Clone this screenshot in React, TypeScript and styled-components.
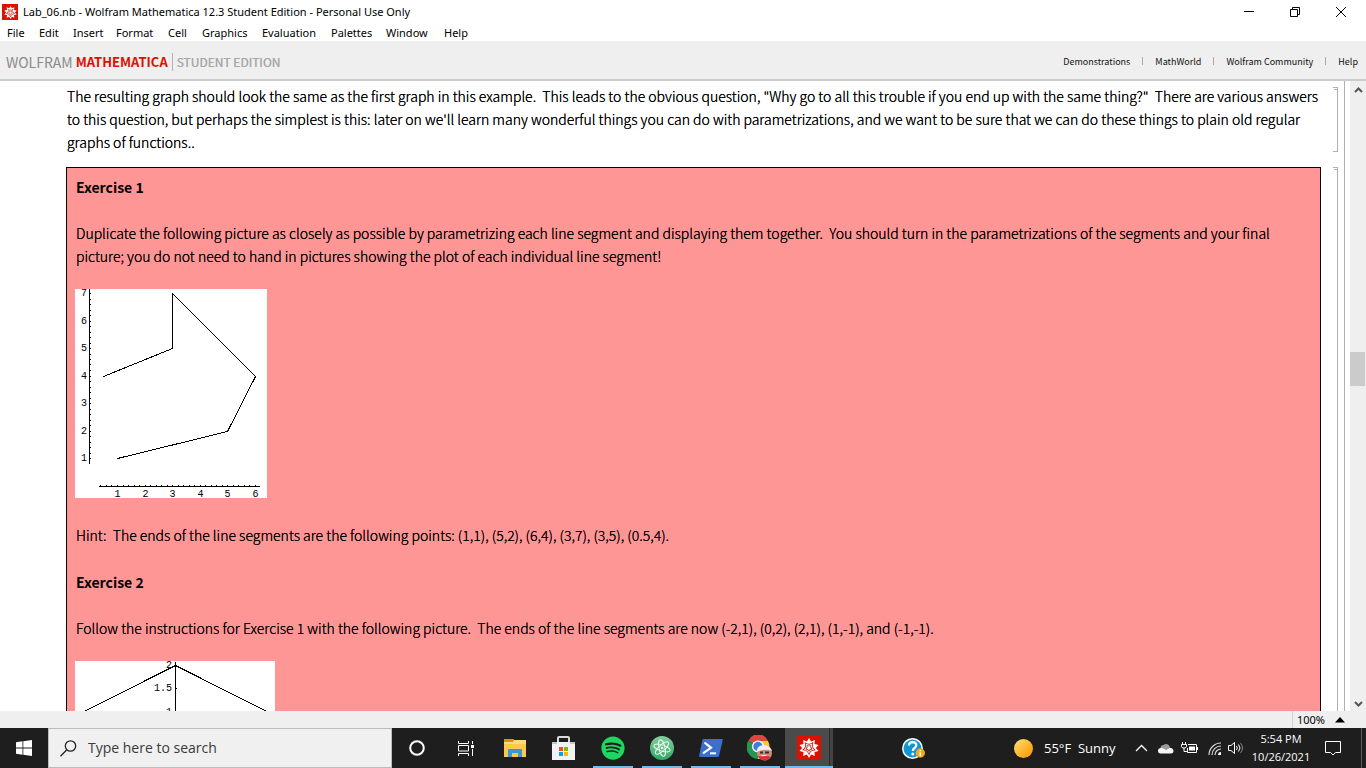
import React from 'react';
import styled, { createGlobalStyle } from 'styled-components';
import { FaSpotify } from 'react-icons/fa';
import { SiWolframmathematica } from 'react-icons/si';

const ui = "'Open Sans', 'Noto Sans', sans-serif";
const uiSmall = "'Noto Sans', 'Open Sans', sans-serif";
const doc = "'Noto Sans CJK SC', 'Noto Sans', sans-serif";

const GlobalStyle = createGlobalStyle`
  * { box-sizing: border-box; }
  body { margin: 0; background: #fff; color: #000; font-family: ${ui}; }
  button { border: 0; padding: 0; background: none; color: inherit; font: inherit; }
  svg { display: block; flex: none; }
`;

const Screen = styled.div`
  display: flex;
  flex-direction: column;
  height: 100vh;
  overflow: hidden;
`;

/* ---------- window chrome ---------- */

const TitleBar = styled.header`
  flex: none;
  display: flex;
  align-items: center;
  height: 24px;
  padding: 0 2px;
`;

const AppBadge = styled.span<{ $size: number }>`
  display: flex;
  align-items: center;
  justify-content: center;
  width: ${p => p.$size}px;
  height: ${p => p.$size}px;
  background: #dd1100;
  color: #fff;
`;

const WindowTitle = styled.h1`
  flex: 1;
  margin: 0 0 0 5px;
  font-family: ${uiSmall};
  font-size: 11px;
  font-weight: 400;
  line-height: 16px;
  white-space: nowrap;
`;

const WindowButton = styled.button`
  display: flex;
  align-items: center;
  justify-content: center;
  width: 46px;
  height: 20px;
`;

const MenuBar = styled.nav`
  flex: none;
  display: grid;
  grid-template-columns: 32px 34px 43px 52px 34px 60px 69px 55px 58px auto;
  justify-content: start;
  height: 17px;
  padding-left: 7px;
`;

const MenuItem = styled.button`
  font-family: ${uiSmall};
  font-size: 11px;
  line-height: 16px;
  text-align: left;
`;

const Banner = styled.div`
  flex: none;
  display: flex;
  align-items: center;
  justify-content: space-between;
  height: 40px;
  padding: 4px 8px 0 6px;
  background: #efefef;
  border-bottom: 2px solid #cbcbcb;
`;

const Brand = styled.div`
  display: flex;
  align-items: center;
  gap: 3px;
  font-family: ${doc};
  font-size: 14px;
  line-height: 18px;
  color: #8a8a8a;
  white-space: nowrap;
`;

const BrandRed = styled.span`
  color: #dd1100;
  font-size: 13px;
  font-weight: 700;
`;

const Edition = styled.span`
  margin-left: 1px;
  padding-left: 4px;
  border-left: 1px solid #b4b4b4;
  color: #a8a8a8;
  font-size: 12px;
  text-shadow: 0 0 0 #a8a8a8;
`;

const BannerLinks = styled.nav`
  display: flex;
  align-items: center;
  font-family: ${doc};
  font-size: 9px;
  line-height: 12px;
`;

const BannerLink = styled.a`
  color: #111;
  text-decoration: none;
  white-space: nowrap;
  & + & {
    margin-left: 12px;
    padding-left: 13px;
    background: linear-gradient(#a8a8a8, #a8a8a8) left 1px / 1px 8px no-repeat;
  }
`;

/* ---------- notebook ---------- */

const Workspace = styled.div`
  flex: 1;
  min-height: 0;
  display: flex;
`;

const Notebook = styled.main`
  flex: 1;
  min-width: 0;
  overflow: hidden;
  padding: 4px 6px 0 66px;
  border-right: 1px solid #b0b0b0;
  font-family: ${doc};
  font-size: 14px;
  font-weight: 300;
  line-height: 23px;
`;

const CellRow = styled.section`
  display: flex;
  gap: 12px;
  & + & { margin-top: 13px; }
`;

const TextCell = styled.p`
  flex: 1;
  min-width: 0;
  margin: 0;
  padding: 0 0 0 1px;
  white-space: pre;
  text-shadow: 0 0 0 #000;
`;

const ExerciseCell = styled.article`
  flex: 1;
  min-width: 0;
  padding: 8px 8px 20px;
  background: #ff9696;
  border: 1px solid #000;
`;

const Heading = styled.h2`
  margin: 0 0 23px 1px;
  font-size: 14px;
  font-weight: 700;
  line-height: 23px;
`;

const Para = styled.p<{ $after?: number }>`
  margin: 0 0 ${p => p.$after ?? 21}px 1px;
  white-space: pre;
  text-shadow: 0 0 0 #000;
`;

const Figure = styled.figure`
  margin: 0 0 26px;
`;

const Bracket = styled.div<{ $inset?: number }>`
  width: 5px;
  flex: none;
  margin: ${p => p.$inset ?? 0}px 0;
  border: 1px solid #b0b0b0;
  border-left: 0;
  background: linear-gradient(#b0b0b0, #b0b0b0) right 1px / 3px 1px no-repeat;
`;

const ScrollBar = styled.div`
  flex: none;
  display: flex;
  flex-direction: column;
  align-items: center;
  width: 16px;
  margin-left: 5px;
  padding: 5px 0 3px;
  background: #efefef;
`;

const ScrollTrack = styled.div`
  flex: 1;
  display: flex;
  flex-direction: column;
  align-self: stretch;
`;

const Spacer = styled.div<{ $grow: number }>`
  flex: ${p => p.$grow};
`;

const Thumb = styled.div`
  height: 34px;
  margin-right: 1px;
  background: #cbcbcb;
`;

const StatusBar = styled.footer`
  flex: none;
  display: flex;
  align-items: center;
  justify-content: flex-end;
  height: 17px;
  padding-right: 21px;
  background: #efefef;
`;

const ZoomLevel = styled.button`
  display: flex;
  align-items: center;
  gap: 10px;
  height: 17px;
  padding-left: 4px;
  border-left: 1px solid #d4d4d4;
  font-family: ${uiSmall};
  font-size: 11px;
  line-height: 16px;
`;

/* ---------- taskbar ---------- */

const Taskbar = styled.div`
  flex: none;
  display: flex;
  height: 40px;
  background: #1e1e1e;
  color: #fff;
`;

const StartButton = styled.button`
  display: flex;
  align-items: center;
  justify-content: center;
  width: 48px;
`;

const SearchBox = styled.label`
  display: flex;
  align-items: center;
  gap: 11px;
  width: 344px;
  padding-left: 11px;
  background: #f0f0f0;
  border: 1px solid #bcbcbc;
  color: #333;
`;

const SearchInput = styled.input`
  flex: 1;
  min-width: 0;
  border: 0;
  padding: 0;
  outline: 0;
  background: none;
  font-family: ${ui};
  font-size: 14px;
  line-height: 20px;
  &::placeholder { color: #3a3a3a; opacity: 1; }
`;

const TaskButton = styled.button<{ $state?: 'running' | 'active' }>`
  display: flex;
  align-items: center;
  justify-content: center;
  width: 49px;
  background: ${p =>
    p.$state === 'active'
      ? 'linear-gradient(#76b9ed, #76b9ed) right bottom / 48px 2px no-repeat, linear-gradient(90deg, transparent 1px, #4b4b4b 1px, #4b4b4b 45px, #2a2a2a 45px, #2a2a2a 46px, #444 46px)'
      : p.$state === 'running'
        ? 'linear-gradient(#76b9ed, #76b9ed) 5px bottom / 40px 2px no-repeat'
        : 'none'};
`;

const HelpButton = styled(TaskButton)`
  margin-left: 56px;
`;

const Tray = styled.div`
  display: flex;
  align-items: center;
  margin-left: auto;
`;

const TrayButton = styled.button<{ $width: number }>`
  display: flex;
  align-items: center;
  justify-content: center;
  width: ${p => p.$width}px;
  height: 40px;
`;

const Weather = styled.button`
  display: flex;
  align-items: center;
  gap: 11px;
  width: 115px;
  height: 40px;
  font-size: 13px;
  white-space: pre;
`;

const Sun = styled.span`
  width: 19px;
  height: 19px;
  border-radius: 50%;
  background: linear-gradient(135deg, #ffe27a, #ffb52e 55%, #ff9500);
`;

const Clock = styled.button`
  width: 70px;
  height: 40px;
  font-size: 11px;
  line-height: 18px;
  text-align: center;
`;

const ShowDesktop = styled.button`
  width: 5px;
  margin-left: 11px;
  height: 40px;
  border-left: 1px solid #5c5c5c;
`;

/* ---------- plots ---------- */

const PlotSvg = styled.svg`
  background: #fff;
  overflow: visible;
  font-family: 'Liberation Mono', monospace;
  font-size: 10px;
  font-weight: 400;
  text-anchor: middle;
  fill: #000;
`;

/* plot units to the centre of a pixel */
const px = (x: number) => Math.floor(42.5 + (x - 1) * 27.6) + 0.5;
const py = (y: number) => Math.floor(169.5 - (y - 1) * 27.5) + 0.5;

function PlotOne() {
  const pts = [[1, 1], [5, 2], [6, 4], [3, 7], [3, 5], [0.5, 4]];
  return (
    <PlotSvg width="192" height="209" viewBox="0 0 192 209" role="img" aria-label="Line segments of Exercise 1">
      <g stroke="#000" fill="none" shapeRendering="crispEdges">
        <path d="M14.5 0V175M24 197.5H185" />
        {Array.from({ length: 31 }, (_, i) => (
          <path key={i} d={`M15 ${py(1 + i / 5)}h1`} />
        ))}
        {Array.from({ length: 29 }, (_, i) => (
          <path key={i} d={`M${px(0.4 + i / 5)} 197v-1`} />
        ))}
        <polyline points={pts.map(([x, y]) => `${px(x)},${py(y)}`).join(' ')} />
      </g>
      {[1, 2, 3, 4, 5, 6, 7].map(n => (
        <text key={n} x="9" y={py(n) + 2.5}>{n}</text>
      ))}
      {[1, 2, 3, 4, 5, 6].map(n => (
        <text key={n} x={px(n)} y="208">{n}</text>
      ))}
    </PlotSvg>
  );
}

function PlotTwo() {
  return (
    <PlotSvg width="200" height="200" viewBox="0 0 200 200" role="img" aria-label="Line segments of Exercise 2">
      <g stroke="#000" fill="none" shapeRendering="crispEdges">
        <path d="M100.5 1V190M101 27.5h1M101 50.5h1" />
        <polyline points="100.5,4.5 191.5,50.2 146.5,142.5 54.5,142.5 9.5,50.2 100.5,4.5" />
      </g>
      <text x="94" y="7">2</text>
      <text x="88" y="30">1.5</text>
      <text x="94" y="54">1</text>
    </PlotSvg>
  );
}

/* ---------- icons ---------- */

const Chevron = ({ up }: { up?: boolean }) => (
  <svg width="9" height="8" viewBox="0 0 9 8" fill="none" stroke="#555" strokeWidth="2">
    <path d={up ? 'M1 6l3.500-3.500L8 6' : 'M1 2l3.500 3.500L8 2'} />
  </svg>
);

const TaskViewIcon = () => (
  <svg width="16" height="15" viewBox="0 0 16 15" fill="none" stroke="#fff">
    <path d="M.5 0v2.500h10V0M.5 15v-2.500h10V15M.5 4.500h10v5.500H.5zM14.500 0v3M14.500 8v7" />
    <path d="M13 4h3v3h-3z" fill="#fff" stroke="none" />
  </svg>
);

const ExplorerIcon = () => (
  <svg width="22" height="18" viewBox="0 0 22 18">
    <path d="M0 0h9l1 1h12v17H0z" fill="#fdc94c" />
    <path d="M0 0h9l1 1v1L9 3H0z" fill="#d99400" />
    <path d="M10 1h12v4H0V3h9z" fill="#fbd97e" />
    <path d="M4 18v-7q0-1 1-1h12q1 0 1 1v7h-4v-4H8v4z" fill="#3d96d8" />
  </svg>
);

const StoreIcon = () => (
  <svg width="23" height="24" viewBox="0 0 23 24">
    <path d="M6 7V2q0-1 1-1h9q1 0 1 1v5" fill="none" stroke="#dadada" strokeWidth="2" />
    <path d="M0 6h23v18H0z" fill="#f2f2f2" />
    <path d="M0 6h5v2H0zM18 6h5v2h-5z" fill="#c4c4c4" />
    <path d="M7 11h4v4H7z" fill="#f25022" />
    <path d="M12 11h4v4h-4z" fill="#7fba00" />
    <path d="M7 16h4v4H7z" fill="#00a4ef" />
    <path d="M12 16h4v4h-4z" fill="#ffb900" />
  </svg>
);

const AtomIcon = () => (
  <svg width="24" height="24" viewBox="0 0 24 24">
    <defs>
      <linearGradient id="atom" x1="0" y1="0" x2="0" y2="1">
        <stop offset="0" stopColor="#84cf9f" />
        <stop offset="1" stopColor="#2fa866" />
      </linearGradient>
    </defs>
    <circle cx="12" cy="12" r="12" fill="url(#atom)" />
    <g fill="none" stroke="#e6f8ec" strokeWidth="1">
      <ellipse cx="12" cy="12" rx="3" ry="8.500" transform="rotate(-12 12 12)" />
      <ellipse cx="12" cy="12" rx="3" ry="8.500" transform="rotate(48 12 12)" />
      <ellipse cx="12" cy="12" rx="3" ry="8.500" transform="rotate(108 12 12)" />
    </g>
    <circle cx="12" cy="12" r="1.300" fill="#fff" />
  </svg>
);

const PowerShellIcon = () => (
  <svg width="24" height="18" viewBox="0 0 24 18">
    <path d="M4.500 0H23q1 0 .8 1L20 17q-.3 1-1.300 1H.8Q-.1 18 .1 17L3.400 1q.2-1 1.100-1z" fill="#3c6fc9" />
    <path d="M5.500 3.500l6.500 5.300-8 5.500" fill="none" stroke="#fff" strokeWidth="2.200" />
    <path d="M11 14.300h6" stroke="#fff" strokeWidth="2" />
  </svg>
);

const ChromeIcon = () => (
  <svg width="26" height="26" viewBox="0 0 26 26">
    <path d="M11 12L1.500 5.500A11 12 0 0 1 21 6z" fill="#d8483e" />
    <path d="M11 12L13 6h8A11 12 0 0 1 11 24z" fill="#f8c83c" />
    <path d="M11 12v12A12 12 0 0 1 1.500 5.500z" fill="#27964f" />
    <circle cx="11" cy="11.500" r="6" fill="#fff" />
    <circle cx="11" cy="11.500" r="4.700" fill="#3f7be0" />
    <circle cx="17.500" cy="18" r="7.500" fill="#c98f7c" />
    <path d="M9.500 17q.5-7 8-7 6 1 7.500 6-7-3-15.500 1z" fill="#f2eeee" />
    <path d="M10.500 21l5.500.5 3-1 4.500 1.500q-2 3.500-5.500 3.500-5-.5-7.500-4.500z" fill="#d8303a" />
    <path d="M13 17.500h3m2 0h4" stroke="#3a2a2a" strokeWidth="1.800" />
    <path d="M14.500 20.500h5" stroke="#f4e8e0" />
  </svg>
);

const HelpIcon = () => (
  <svg width="23" height="21" viewBox="0 0 23 21">
    <circle cx="10.500" cy="10.500" r="10.500" fill="#fff" />
    <circle cx="10.500" cy="10.500" r="9" fill="#0f96d4" />
    <path d="M6.800 7.500q.4-3.400 3.900-3.400 3.600.2 3.600 3.200 0 1.700-1.900 2.900-1.600 1-1.600 2.700" fill="none" stroke="#fff" strokeWidth="2.300" />
    <circle cx="10.800" cy="16" r="1.500" fill="#fff" />
    <circle cx="18.300" cy="15" r="4.700" fill="#f4a81d" />
    <path d="M18.300 12v1.300M18.300 14.200v4" stroke="#fff" strokeWidth="1.500" />
  </svg>
);

function TrayIcons() {
  return (
    <>
      <TrayButton $width={24} aria-label="Show hidden icons">
        <svg width="13" height="8" viewBox="0 0 13 8" fill="none" stroke="#fff" strokeWidth="1.300"><path d="M1 7l5.500-5.500L12 7" /></svg>
      </TrayButton>
      <TrayButton $width={24} aria-label="OneDrive">
        <svg width="17" height="11" viewBox="0 0 17 11">
          <path d="M3.500 5a3.200 3.200 0 0 1 3-3A4 4 0 0 1 13 4.500L8 8z" fill="#9a9a9a" />
          <path d="M3 10.500A2.800 2.800 0 0 1 3.500 5Q5 4.500 6.500 5.500L9 7l3.500-2.200q3.500 0 4 3 0 2.700-2.500 2.700z" fill="#f4f4f4" />
        </svg>
      </TrayButton>
      <TrayButton $width={25} aria-label="Battery charging">
        <svg width="17" height="12" viewBox="0 0 17 12" fill="none" stroke="#fff">
          <path d="M1.500 0v2M4.500 0v2M.5 2.500h5v2q0 1.500-2.500 1.500T.5 4.500zM3 6v3.500h3M7 2.500h8.500v8h-9V6" />
          <path d="M8 4.500h6v4H8z" fill="#fff" stroke="none" />
          <path d="M16.500 5v3" />
        </svg>
      </TrayButton>
      <TrayButton $width={24} aria-label="Wireless network">
        <svg width="13" height="13" viewBox="0 0 13 13" fill="none" stroke="#d8d8d8" strokeWidth="1.200">
          <path d="M1 13A12 12 0 0 1 13 1M4 13a9 9 0 0 1 9-9M7 13a6 6 0 0 1 6-6" />
          <path d="M10 13a3 3 0 0 1 3-3v3z" fill="#fff" stroke="none" />
        </svg>
      </TrayButton>
      <TrayButton $width={20} aria-label="Volume">
        <svg width="17" height="14" viewBox="0 0 17 14" fill="none" stroke="#fff">
          <path d="M.5 4.500H3L6.500 1.500v11L3 9.500H.5z" />
          <path d="M8.500 5q1.500 2 0 4M10.500 3.500q3 3.500 0 7" />
          <path d="M12.500 2q4 5 0 10" stroke="#888" />
        </svg>
      </TrayButton>
    </>
  );
}

const menus = ['File', 'Edit', 'Insert', 'Format', 'Cell', 'Graphics', 'Evaluation', 'Palettes', 'Window', 'Help'];
const links = ['Demonstrations', 'MathWorld', 'Wolfram Community', 'Help'];

export default function App() {
  return (
    <Screen>
      <GlobalStyle />
      <TitleBar>
        <AppBadge $size={16}><SiWolframmathematica size={13} /></AppBadge>
        <WindowTitle>Lab_06.nb - Wolfram Mathematica 12.3 Student Edition - Personal Use Only</WindowTitle>
        <WindowButton aria-label="Minimize">
          <svg width="10" height="10" viewBox="0 0 10 10" stroke="#000"><path d="M0 4.500h10" /></svg>
        </WindowButton>
        <WindowButton aria-label="Restore">
          <svg width="10" height="10" viewBox="0 0 10 10" stroke="#000" fill="none"><path d="M.5 2.500h7v7h-7zM2.500 2.500v-2h7v7h-2" /></svg>
        </WindowButton>
        <WindowButton aria-label="Close">
          <svg width="10" height="10" viewBox="0 0 10 10" stroke="#000"><path d="M0 0l10 10M10 0L0 10" /></svg>
        </WindowButton>
      </TitleBar>
      <MenuBar>{menus.map(m => <MenuItem key={m}>{m}</MenuItem>)}</MenuBar>
      <Banner>
        <Brand>
          <span>WOLFRAM</span>
          <BrandRed>MATHEMATICA</BrandRed>
          <Edition>STUDENT EDITION</Edition>
        </Brand>
        <BannerLinks>{links.map(l => <BannerLink key={l} href="#">{l}</BannerLink>)}</BannerLinks>
      </Banner>

      <Workspace>
        <Notebook>
          <CellRow>
            <TextCell>
              The resulting graph should look the same as the first graph in this example.{'  '}This leads to the obvious question, "Why go to all this trouble if you end up with the same thing?"{'  '}There are various answers<br />
              to this question, but perhaps the simplest is this: later on we'll learn many wonderful things you can do with parametrizations, and we want to be sure that we can do these things to plain old regular<br />
              graphs of functions..
            </TextCell>
            <Bracket $inset={2} />
          </CellRow>
          <CellRow>
            <ExerciseCell>
              <Heading>Exercise 1</Heading>
              <Para>
                Duplicate the following picture as closely as possible by parametrizing each line segment and displaying them together.{'  '}You should turn in the parametrizations of the segments and your final<br />
                picture; you do not need to hand in pictures showing the plot of each individual line segment!
              </Para>
              <Figure><PlotOne /></Figure>
              <Para $after={24}>
                Hint:{'  '}The ends of the line segments are the following points: (1,1), (5,2), (6,4), (3,7), (3,5), (0.5,4).
              </Para>
              <Heading>Exercise 2</Heading>
              <Para>
                Follow the instructions for Exercise 1 with the following picture.{'  '}The ends of the line segments are now (-2,1), (0,2), (2,1), (1,-1), and (-1,-1).
              </Para>
              <Figure><PlotTwo /></Figure>
            </ExerciseCell>
            <Bracket />
          </CellRow>
        </Notebook>
        <ScrollBar>
          <Chevron up />
          <ScrollTrack><Spacer $grow={257} /><Thumb /><Spacer $grow={313} /></ScrollTrack>
          <Chevron />
        </ScrollBar>
      </Workspace>
      <StatusBar>
        <ZoomLevel>100%<svg width="10" height="6" viewBox="0 0 10 6"><path d="M5 0l5 5.500H0z" /></svg></ZoomLevel>
      </StatusBar>

      <Taskbar>
        <StartButton aria-label="Start">
          <svg width="16" height="16" viewBox="0 0 16 16" fill="#fff"><path d="M0 2.200L6.500 1.300v6.200H0zM7.300 1.200L16 0v7.500H7.300zM0 8.400h6.500v6.300L0 13.800zM7.300 8.400H16V16l-8.700-1.200z" /></svg>
        </StartButton>
        <SearchBox>
          <svg width="17" height="17" viewBox="0 0 17 17" fill="none" stroke="#222" strokeWidth="1.300"><circle cx="10.500" cy="6" r="5.200" /><path d="M6.800 9.800L.5 16.200" /></svg>
          <SearchInput aria-label="Search" placeholder="Type here to search" />
        </SearchBox>
        <TaskButton aria-label="Cortana">
          <svg width="16" height="16" viewBox="0 0 16 16" fill="none" stroke="#fff" strokeWidth="2"><circle cx="8" cy="8" r="6.800" /></svg>
        </TaskButton>
        <TaskButton aria-label="Task view"><TaskViewIcon /></TaskButton>
        <TaskButton aria-label="File Explorer"><ExplorerIcon /></TaskButton>
        <TaskButton aria-label="Store"><StoreIcon /></TaskButton>
        <TaskButton $state="running" aria-label="Spotify"><FaSpotify size={24} color="#1ed760" /></TaskButton>
        <TaskButton $state="running" aria-label="Atom"><AtomIcon /></TaskButton>
        <TaskButton $state="running" aria-label="PowerShell"><PowerShellIcon /></TaskButton>
        <TaskButton $state="running" aria-label="Chrome"><ChromeIcon /></TaskButton>
        <TaskButton $state="active" aria-label="Mathematica"><AppBadge $size={24}><SiWolframmathematica size={20} /></AppBadge></TaskButton>
        <HelpButton aria-label="Get help"><HelpIcon /></HelpButton>
        <Tray>
          <Weather><Sun />55°F  Sunny</Weather>
          <TrayIcons />
          <Clock>5:54 PM<br />10/26/2021</Clock>
          <TrayButton $width={34} aria-label="Notifications">
            <svg width="16" height="16" viewBox="0 0 16 16" fill="none" stroke="#fff"><path d="M.5 1.500h15v11h-5L8 15l-2.500-2.500h-5z" /></svg>
          </TrayButton>
        </Tray>
        <ShowDesktop aria-label="Show desktop" />
      </Taskbar>
    </Screen>
  );
}
